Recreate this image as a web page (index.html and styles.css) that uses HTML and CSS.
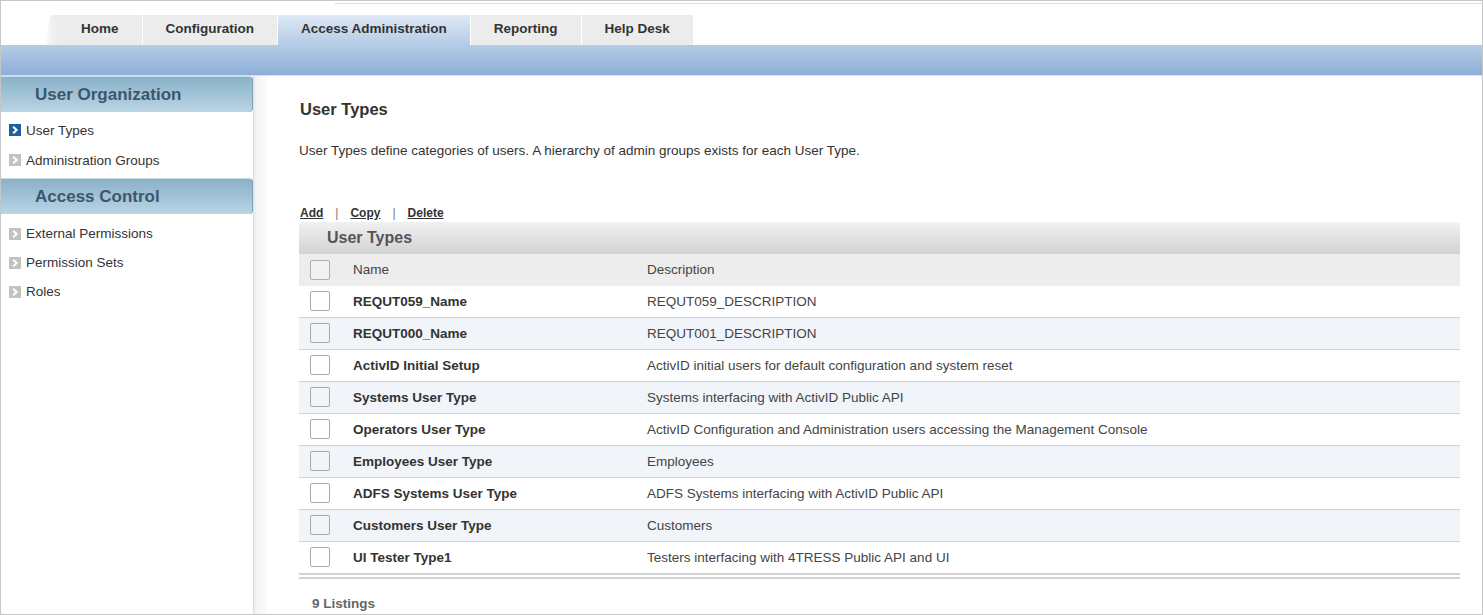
FILE: index.html
```html
<!DOCTYPE html>
<html lang="en">
<head>
<meta charset="utf-8">
<title>User Types</title>
<link rel="stylesheet" href="styles.css">
</head>
<body>
<div class="frame">
  <header class="masthead">
    <div class="rule"></div>
    <nav class="tabs">
      <span class="tab-lead"></span>
      <a class="tab">Home</a>
      <a class="tab">Configuration</a>
      <a class="tab is-active">Access Administration</a>
      <a class="tab">Reporting</a>
      <a class="tab">Help Desk</a>
    </nav>
  </header>
  <div class="band"></div>

  <div class="workspace">
    <aside class="sidebar">
      <h2 class="side-head">User Organization</h2>
      <ul class="side-list">
        <li class="side-item is-current">
          <svg class="chev" viewBox="0 0 12 12"><rect width="12" height="12" fill="#1e5ea6"/><path d="M4.2 2.8 L7.6 6 L4.2 9.2" fill="none" stroke="#fff" stroke-width="2"/></svg>
          <span>User Types</span>
        </li>
        <li class="side-item">
          <svg class="chev" viewBox="0 0 12 12"><rect width="12" height="12" fill="#c2c2c2"/><path d="M4.2 2.8 L7.6 6 L4.2 9.2" fill="none" stroke="#fff" stroke-width="2"/></svg>
          <span>Administration Groups</span>
        </li>
      </ul>
      <h2 class="side-head">Access Control</h2>
      <ul class="side-list side-list-tight">
        <li class="side-item">
          <svg class="chev" viewBox="0 0 12 12"><rect width="12" height="12" fill="#c2c2c2"/><path d="M4.2 2.8 L7.6 6 L4.2 9.2" fill="none" stroke="#fff" stroke-width="2"/></svg>
          <span>External Permissions</span>
        </li>
        <li class="side-item">
          <svg class="chev" viewBox="0 0 12 12"><rect width="12" height="12" fill="#c2c2c2"/><path d="M4.2 2.8 L7.6 6 L4.2 9.2" fill="none" stroke="#fff" stroke-width="2"/></svg>
          <span>Permission Sets</span>
        </li>
        <li class="side-item">
          <svg class="chev" viewBox="0 0 12 12"><rect width="12" height="12" fill="#c2c2c2"/><path d="M4.2 2.8 L7.6 6 L4.2 9.2" fill="none" stroke="#fff" stroke-width="2"/></svg>
          <span>Roles</span>
        </li>
      </ul>
    </aside>
    <div class="gutter"></div>

    <main class="content">
      <h1 class="page-title">User Types</h1>
      <p class="page-desc">User Types define categories of users. A hierarchy of admin groups exists for each User Type.</p>

      <div class="actions">
        <a class="action">Add</a><span class="sep">|</span><a class="action">Copy</a><span class="sep">|</span><a class="action">Delete</a>
      </div>

      <section class="grid">
        <div class="grid-title">User Types</div>
        <div class="row row-head">
          <span class="cell-check"><span class="box"></span></span>
          <span class="cell-name">Name</span>
          <span class="cell-desc">Description</span>
        </div>
        <div class="row">
          <span class="cell-check"><span class="box"></span></span>
          <span class="cell-name">REQUT059_Name</span>
          <span class="cell-desc">REQUT059_DESCRIPTION</span>
        </div>
        <div class="row row-alt">
          <span class="cell-check"><span class="box"></span></span>
          <span class="cell-name">REQUT000_Name</span>
          <span class="cell-desc">REQUT001_DESCRIPTION</span>
        </div>
        <div class="row">
          <span class="cell-check"><span class="box"></span></span>
          <span class="cell-name">ActivID Initial Setup</span>
          <span class="cell-desc">ActivID initial users for default configuration and system reset</span>
        </div>
        <div class="row row-alt">
          <span class="cell-check"><span class="box"></span></span>
          <span class="cell-name">Systems User Type</span>
          <span class="cell-desc">Systems interfacing with ActivID Public API</span>
        </div>
        <div class="row">
          <span class="cell-check"><span class="box"></span></span>
          <span class="cell-name">Operators User Type</span>
          <span class="cell-desc">ActivID Configuration and Administration users accessing the Management Console</span>
        </div>
        <div class="row row-alt">
          <span class="cell-check"><span class="box"></span></span>
          <span class="cell-name">Employees User Type</span>
          <span class="cell-desc">Employees</span>
        </div>
        <div class="row">
          <span class="cell-check"><span class="box"></span></span>
          <span class="cell-name">ADFS Systems User Type</span>
          <span class="cell-desc">ADFS Systems interfacing with ActivID Public API</span>
        </div>
        <div class="row row-alt">
          <span class="cell-check"><span class="box"></span></span>
          <span class="cell-name">Customers User Type</span>
          <span class="cell-desc">Customers</span>
        </div>
        <div class="row">
          <span class="cell-check"><span class="box"></span></span>
          <span class="cell-name">UI Tester Type1</span>
          <span class="cell-desc">Testers interfacing with 4TRESS Public API and UI</span>
        </div>
        <div class="grid-end"></div>
        <div class="grid-count">9 Listings</div>
      </section>
    </main>
  </div>
</div>
</body>
</html>
```

FILE: styles.css
```css
* {
  box-sizing: border-box;
}

html,
body {
  margin: 0;
  padding: 0;
  background: #fff;
}

body {
  font-family: "Liberation Sans", Arial, sans-serif;
  color: #333;
}

.frame {
  width: 1483px;
  height: 615px;
  border: 1px solid #c6c6c6;
  display: flex;
  flex-direction: column;
  overflow: hidden;
}

/* ---- top navigation ---- */
.masthead {
  height: 44px;
  display: flex;
  flex-direction: column;
}

.rule {
  margin: 2px 0 0 334px;
  height: 1px;
  background: #dcdcdc;
}

.tabs {
  margin-top: 11px;
  height: 30px;
  display: flex;
  padding-left: 43px;
}

.tab-lead {
  width: 14px;
  height: 30px;
  background: linear-gradient(90deg, #ffffff 0%, #f0f0f0 60%, #ececec 100%);
  clip-path: polygon(45% 0, 100% 0, 100% 100%, 0 100%);
}

.tab {
  display: flex;
  align-items: center;
  justify-content: center;
  padding: 0 23px 3px;
  height: 30px;
  background: #ececec;
  font-size: 13.5px;
  font-weight: bold;
  color: #333;
  margin-left: 1px;
}

.tab-lead + .tab {
  margin-left: 0;
}

.tab.is-active {
  background: linear-gradient(180deg, #dfe9f5 0%, #b4cbe5 100%);
}

.band {
  height: 31px;
  background: linear-gradient(180deg, #b4cce6 0%, #8daed7 100%);
  border-bottom: 1px solid #d2e0f0;
}

/* ---- workspace ---- */
.workspace {
  flex: 1;
  display: flex;
  min-height: 0;
}

.sidebar {
  width: 252px;
  flex: none;
}

.side-head {
  margin: 0;
  height: 36px;
  padding-left: 34px;
  display: flex;
  align-items: center;
  font-size: 17px;
  font-weight: bold;
  color: #3b576c;
  background: linear-gradient(180deg, #8ab1c9 0%, #a4c4d8 55%, #bad5e5 100%);
  border-top: 1px solid #c6dbe8;
  border-right: 1px solid #7fa3bb;
  border-radius: 0 4px 4px 0;
}

.side-list {
  list-style: none;
  margin: 0;
  padding: 3px 0 3px;
}

.side-list-tight {
  padding-top: 5px;
}

.side-item {
  height: 30px;
  display: flex;
  align-items: center;
  padding-left: 8px;
  font-size: 13.5px;
  color: #333;
}

.side-list-tight .side-item {
  height: 29px;
}

.chev {
  width: 12px;
  height: 12px;
  margin-right: 5px;
  flex: none;
}

.gutter {
  width: 14px;
  flex: none;
  border-left: 1px solid #dedede;
  background: linear-gradient(90deg, #ededed 0%, #f6f6f6 30%, #fafafa 100%);
}

.content {
  flex: 1;
  padding: 23px 22px 0 32px;
  min-width: 0;
}

.page-title {
  margin: 0;
  font-size: 16.5px;
  line-height: 20px;
  font-weight: bold;
  color: #333;
  padding-left: 1px;
}

.page-desc {
  margin: 23px 0 0;
  font-size: 13.5px;
  line-height: 18px;
  color: #333;
}

.actions {
  margin-top: 45px;
  height: 16px;
  display: flex;
  align-items: center;
  font-size: 12px;
  padding-left: 1px;
}

.action {
  font-weight: bold;
  color: #333;
  text-decoration: underline;
}

.sep {
  color: #777;
  margin: 0 12px 0 12px;
}

/* ---- listing table ---- */
.grid {
  margin-top: 1px;
}

.grid-title {
  height: 32px;
  display: flex;
  align-items: center;
  padding-left: 28px;
  font-size: 16px;
  font-weight: bold;
  color: #555;
  background: linear-gradient(180deg, #f1f1f1 0%, #d3d3d3 100%);
  border-radius: 4px 4px 0 0;
}

.row {
  height: 32px;
  display: grid;
  grid-template-columns: 54px 294px 1fr;
  align-items: center;
  font-size: 13.5px;
  border-bottom: 1px solid #d2d2d2;
  background: #fff;
}

.row-alt {
  background: #f1f4f9;
}

.row-head {
  background: #ededed;
  border-bottom: none;
  color: #444;
}

.cell-check {
  padding-left: 11px;
  display: flex;
  align-items: center;
}

.box {
  width: 20px;
  height: 20px;
  border: 1px solid #a9a9a9;
  border-radius: 2px;
  margin-top: -2px;
}

.row-head .box {
  margin-top: 0;
  border-color: #b0b0b0;
  background: #f2f2f2;
}

.cell-name {
  font-weight: bold;
  color: #333;
}

.row-head .cell-name {
  font-weight: normal;
  color: #444;
}

.cell-desc {
  color: #444;
}

.row-head .cell-name,
.row-head .cell-desc {
  margin-top: -1px;
}

.grid-end {
  height: 5px;
  margin-top: 0;
  border-bottom: 2px solid #d2d2d2;
  border-top: 1px solid #d2d2d2;
}

.grid-count {
  margin-top: 16px;
  padding-left: 13px;
  font-size: 13.5px;
  line-height: 18px;
  font-weight: bold;
  color: #666;
}
```
